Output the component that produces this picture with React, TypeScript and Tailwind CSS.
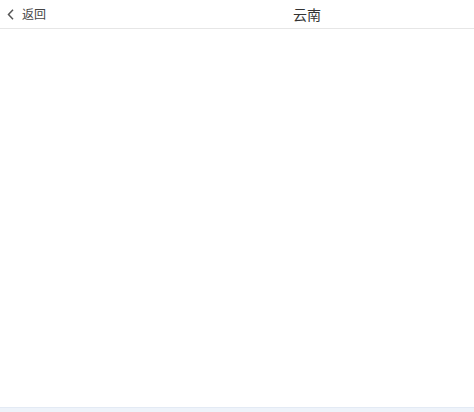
import React from "react";

// Header bar with back button and centred title
const Header = () => {
  return (
    <div className="flex items-center h-[29px] border-b border-[#e6e6e6] bg-white">
      <div className="flex items-center w-[140px] pl-[7px] gap-[8px] text-[#444] cursor-pointer">
        <svg width="7" height="11" viewBox="0 0 7 11" fill="none">
          <path d="M6 0.8 L1.5 5.5 L6 10.2" stroke="#555" strokeWidth="1.5" />
        </svg>
        <span className="text-[12px] leading-none pt-[1px]">返回</span>
      </div>
      <div className="flex-1 text-center text-[14px] text-[#333] leading-none pt-[1px]">云南</div>
    </div>
  );
};

export default function App() {
  return (
    <div
      className="w-[474px] h-[412px] flex flex-col bg-white overflow-hidden"
      style={{ fontFamily: '"Noto Sans", "Noto Sans CJK SC", sans-serif' }}
    >
      <Header />
      <div className="flex-1" />
      <div className="h-[5px] bg-[#eef3fa] border-t border-[#e3eaf4]" />
    </div>
  );
}
